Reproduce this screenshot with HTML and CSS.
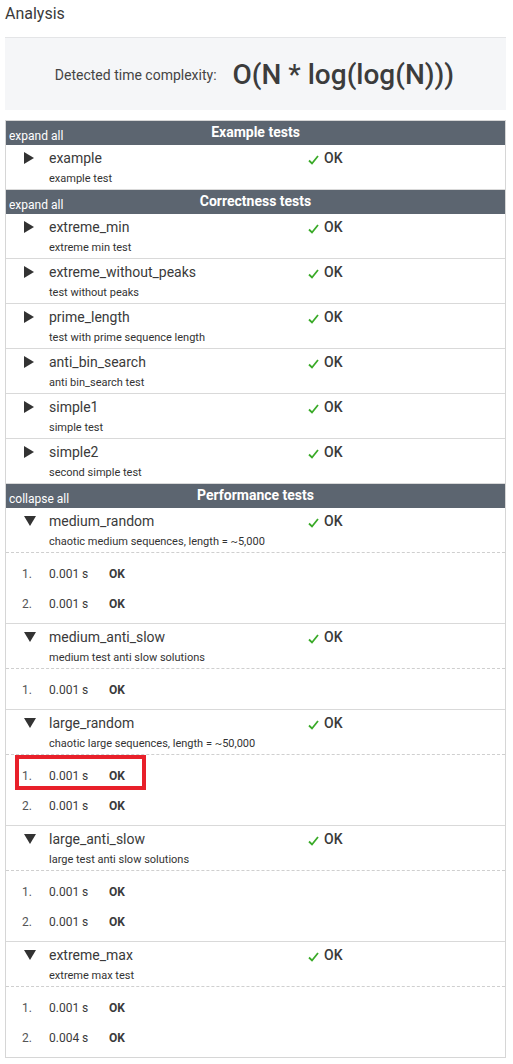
FILE: index.html
```html
<!DOCTYPE html>
<html>
<head>
<meta charset="utf-8">
<link rel="stylesheet" href="styles.css">
</head>
<body>
<div class="page">
  <h2 class="title">Analysis</h2>
  <div class="complexity">
    <span class="cx-label">Detected time complexity:</span>
    <span class="cx-value">O(N * log(log(N)))</span>
  </div>

  <div class="tests">
    <div class="group-head"><span class="toggle-all">expand all</span><span class="group-title">Example tests</span><span></span></div>
    <div class="test">
      <div class="test-head">
        <span class="tri"><svg width="10" height="12" viewBox="0 0 10 12"><path d="M0 0 L10 6 L0 12 Z" fill="#333"/></svg></span>
        <span class="name">example</span>
        <span class="status"><svg class="check" width="11" height="10" viewBox="0 0 11 10"><path d="M1 5.5 L4 8.5 L10 1" fill="none" stroke="#3aaa28" stroke-width="1.8"/></svg>OK</span>
        <span class="desc">example test</span>
      </div>
    </div>

    <div class="group-head"><span class="toggle-all">expand all</span><span class="group-title">Correctness tests</span><span></span></div>
    <div class="test">
      <div class="test-head">
        <span class="tri"><svg width="10" height="12" viewBox="0 0 10 12"><path d="M0 0 L10 6 L0 12 Z" fill="#333"/></svg></span>
        <span class="name">extreme_min</span>
        <span class="status"><svg class="check" width="11" height="10" viewBox="0 0 11 10"><path d="M1 5.5 L4 8.5 L10 1" fill="none" stroke="#3aaa28" stroke-width="1.8"/></svg>OK</span>
        <span class="desc">extreme min test</span>
      </div>
    </div>
    <div class="test">
      <div class="test-head">
        <span class="tri"><svg width="10" height="12" viewBox="0 0 10 12"><path d="M0 0 L10 6 L0 12 Z" fill="#333"/></svg></span>
        <span class="name">extreme_without_peaks</span>
        <span class="status"><svg class="check" width="11" height="10" viewBox="0 0 11 10"><path d="M1 5.5 L4 8.5 L10 1" fill="none" stroke="#3aaa28" stroke-width="1.8"/></svg>OK</span>
        <span class="desc">test without peaks</span>
      </div>
    </div>
    <div class="test">
      <div class="test-head">
        <span class="tri"><svg width="10" height="12" viewBox="0 0 10 12"><path d="M0 0 L10 6 L0 12 Z" fill="#333"/></svg></span>
        <span class="name">prime_length</span>
        <span class="status"><svg class="check" width="11" height="10" viewBox="0 0 11 10"><path d="M1 5.5 L4 8.5 L10 1" fill="none" stroke="#3aaa28" stroke-width="1.8"/></svg>OK</span>
        <span class="desc">test with prime sequence length</span>
      </div>
    </div>
    <div class="test">
      <div class="test-head">
        <span class="tri"><svg width="10" height="12" viewBox="0 0 10 12"><path d="M0 0 L10 6 L0 12 Z" fill="#333"/></svg></span>
        <span class="name">anti_bin_search</span>
        <span class="status"><svg class="check" width="11" height="10" viewBox="0 0 11 10"><path d="M1 5.5 L4 8.5 L10 1" fill="none" stroke="#3aaa28" stroke-width="1.8"/></svg>OK</span>
        <span class="desc">anti bin_search test</span>
      </div>
    </div>
    <div class="test">
      <div class="test-head">
        <span class="tri"><svg width="10" height="12" viewBox="0 0 10 12"><path d="M0 0 L10 6 L0 12 Z" fill="#333"/></svg></span>
        <span class="name">simple1</span>
        <span class="status"><svg class="check" width="11" height="10" viewBox="0 0 11 10"><path d="M1 5.5 L4 8.5 L10 1" fill="none" stroke="#3aaa28" stroke-width="1.8"/></svg>OK</span>
        <span class="desc">simple test</span>
      </div>
    </div>
    <div class="test">
      <div class="test-head">
        <span class="tri"><svg width="10" height="12" viewBox="0 0 10 12"><path d="M0 0 L10 6 L0 12 Z" fill="#333"/></svg></span>
        <span class="name">simple2</span>
        <span class="status"><svg class="check" width="11" height="10" viewBox="0 0 11 10"><path d="M1 5.5 L4 8.5 L10 1" fill="none" stroke="#3aaa28" stroke-width="1.8"/></svg>OK</span>
        <span class="desc">second simple test</span>
      </div>
    </div>

    <div class="group-head"><span class="toggle-all">collapse all</span><span class="group-title">Performance tests</span><span></span></div>
    <div class="test">
      <div class="test-head open">
        <span class="tri"><svg width="12" height="10" viewBox="0 0 12 10"><path d="M0 0 L12 0 L6 10 Z" fill="#333"/></svg></span>
        <span class="name">medium_random</span>
        <span class="status"><svg class="check" width="11" height="10" viewBox="0 0 11 10"><path d="M1 5.5 L4 8.5 L10 1" fill="none" stroke="#3aaa28" stroke-width="1.8"/></svg>OK</span>
        <span class="desc">chaotic medium sequences, length = ~5,000</span>
      </div>
      <ol class="runs">
        <li class="run"><span class="num">1.</span><span class="time">0.001 s</span><span class="res">OK</span></li>
        <li class="run"><span class="num">2.</span><span class="time">0.001 s</span><span class="res">OK</span></li>
      </ol>
    </div>
    <div class="test">
      <div class="test-head open">
        <span class="tri"><svg width="12" height="10" viewBox="0 0 12 10"><path d="M0 0 L12 0 L6 10 Z" fill="#333"/></svg></span>
        <span class="name">medium_anti_slow</span>
        <span class="status"><svg class="check" width="11" height="10" viewBox="0 0 11 10"><path d="M1 5.5 L4 8.5 L10 1" fill="none" stroke="#3aaa28" stroke-width="1.8"/></svg>OK</span>
        <span class="desc">medium test anti slow solutions</span>
      </div>
      <ol class="runs">
        <li class="run"><span class="num">1.</span><span class="time">0.001 s</span><span class="res">OK</span></li>
      </ol>
    </div>
    <div class="test">
      <div class="test-head open">
        <span class="tri"><svg width="12" height="10" viewBox="0 0 12 10"><path d="M0 0 L12 0 L6 10 Z" fill="#333"/></svg></span>
        <span class="name">large_random</span>
        <span class="status"><svg class="check" width="11" height="10" viewBox="0 0 11 10"><path d="M1 5.5 L4 8.5 L10 1" fill="none" stroke="#3aaa28" stroke-width="1.8"/></svg>OK</span>
        <span class="desc">chaotic large sequences, length = ~50,000</span>
      </div>
      <ol class="runs">
        <li class="run"><span class="num">1.</span><span class="time">0.001 s</span><span class="res">OK</span><span class="highlight"></span></li>
        <li class="run"><span class="num">2.</span><span class="time">0.001 s</span><span class="res">OK</span></li>
      </ol>
    </div>
    <div class="test">
      <div class="test-head open">
        <span class="tri"><svg width="12" height="10" viewBox="0 0 12 10"><path d="M0 0 L12 0 L6 10 Z" fill="#333"/></svg></span>
        <span class="name">large_anti_slow</span>
        <span class="status"><svg class="check" width="11" height="10" viewBox="0 0 11 10"><path d="M1 5.5 L4 8.5 L10 1" fill="none" stroke="#3aaa28" stroke-width="1.8"/></svg>OK</span>
        <span class="desc">large test anti slow solutions</span>
      </div>
      <ol class="runs">
        <li class="run"><span class="num">1.</span><span class="time">0.001 s</span><span class="res">OK</span></li>
        <li class="run"><span class="num">2.</span><span class="time">0.001 s</span><span class="res">OK</span></li>
      </ol>
    </div>
    <div class="test last">
      <div class="test-head open">
        <span class="tri"><svg width="12" height="10" viewBox="0 0 12 10"><path d="M0 0 L12 0 L6 10 Z" fill="#333"/></svg></span>
        <span class="name">extreme_max</span>
        <span class="status"><svg class="check" width="11" height="10" viewBox="0 0 11 10"><path d="M1 5.5 L4 8.5 L10 1" fill="none" stroke="#3aaa28" stroke-width="1.8"/></svg>OK</span>
        <span class="desc">extreme max test</span>
      </div>
      <ol class="runs">
        <li class="run"><span class="num">1.</span><span class="time">0.001 s</span><span class="res">OK</span></li>
        <li class="run"><span class="num">2.</span><span class="time">0.004 s</span><span class="res">OK</span></li>
      </ol>
    </div>
  </div>
</div>
</body>
</html>
```

FILE: styles.css
```css
* { box-sizing: border-box; }
html, body { margin: 0; padding: 0; background: #fff; }
body {
  font-family: Roboto, "Liberation Sans", sans-serif;
  color: #3a3a3a;
}
.page {
  width: 501px;
  margin-left: 5px;
}
.title {
  margin: 0;
  font-size: 16px;
  font-weight: 400;
  line-height: 20px;
  padding-top: 4px;
  height: 37px;
  color: #3a3a3a;
}
.complexity {
  height: 73px;
  background: #f5f6f8;
  border-top: 1px solid #e4e5e7;
  display: flex;
  align-items: center;
  justify-content: center;
  gap: 16px;
  padding-right: 2px;
}
.cx-label {
  font-size: 14px;
  color: #444;
  padding-top: 2px;
}
.cx-value {
  font-size: 28px;
  font-weight: 500;
  color: #3c3c3c;
}
.tests {
  margin-top: 10px;
  border: 1px solid #d6d6d6;
}
.group-head {
  display: grid;
  grid-template-columns: 1fr auto 1fr;
  height: 24px;
  background: #5c6570;
  color: #fff;
}
.toggle-all {
  font-size: 12px;
  line-height: 12px;
  padding: 9px 0 0 3px;
}
.group-title {
  font-size: 14px;
  font-weight: 700;
  line-height: 22px;
}
.test { border-bottom: 1px solid #d9d9d9; }
.test.last { border-bottom: 0; }
.test-head {
  display: grid;
  grid-template-columns: 43px 259px 1fr;
  grid-template-rows: 20px 16px;
  row-gap: 2px;
  padding-top: 3px;
  height: 44px;
}
.test-head.open {
  border-bottom: 1px dashed #cfcfcf;
  height: 45px;
}
.tri {
  display: flex;
  align-items: center;
  padding-left: 18px;
}
.name {
  font-size: 14px;
  line-height: 20px;
  color: #3a3a3a;
}
.status {
  font-size: 14px;
  font-weight: 500;
  line-height: 20px;
  color: #3a3a3a;
  display: flex;
  align-items: center;
}
.check { margin: 3px 5px 0 0; }
.desc {
  grid-column: 2 / 4;
  font-size: 11px;
  line-height: 16px;
  color: #333;
  padding-top: 1px;
}
.runs {
  list-style: none;
  margin: 0;
  padding: 6px 0 4px;
}
.run {
  position: relative;
  display: grid;
  grid-template-columns: 26px 43px auto;
  column-gap: 17px;
  height: 30px;
  align-items: center;
  font-size: 12px;
}
.num { text-align: right; color: #555; }
.time { color: #3a3a3a; }
.res { font-weight: 700; color: #3a3a3a; }
.highlight {
  position: absolute;
  left: 9px;
  top: -6px;
  width: 131px;
  height: 35px;
  border: 4px solid #e8202a;
}
```
